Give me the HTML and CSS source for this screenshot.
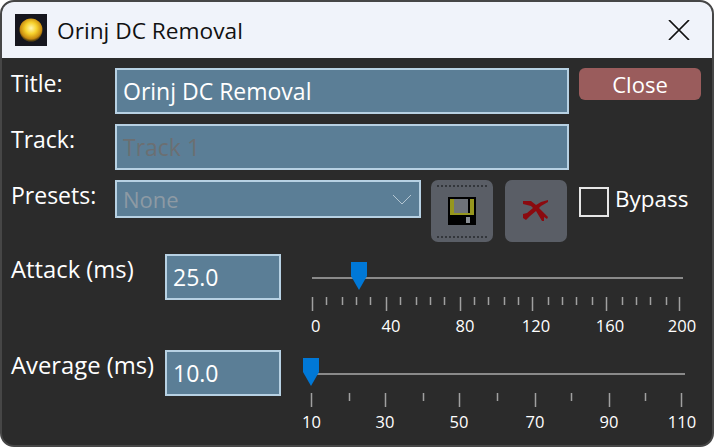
FILE: index.html
```html
<!DOCTYPE html>
<html lang="en">
<head>
  <meta charset="UTF-8" />
  <title>Orinj DC Removal</title>
  <link rel="stylesheet" href="styles.css">
</head>
<body>
  <div class="window">

    <!-- Title bar -->
    <div class="titlebar">
      <svg class="app-icon" width="32" height="32" viewBox="0 0 32 32">
        <defs>
          <radialGradient id="ball" cx="0.5" cy="0.42" r="0.55">
            <stop offset="0" stop-color="#fff6b0" />
            <stop offset="0.45" stop-color="#f7d22c" />
            <stop offset="0.85" stop-color="#c88a10" />
            <stop offset="1" stop-color="#5a4410" />
          </radialGradient>
        </defs>
        <rect width="32" height="32" fill="#16161e" />
        <circle cx="16" cy="16" r="11.5" fill="url(#ball)" />
      </svg>
      <span class="window-title">Orinj DC Removal</span>
      <svg class="close-x" width="22" height="20" viewBox="0 0 22 20">
        <path d="M1 0 L21 20 M21 0 L1 20" stroke="#111" stroke-width="1.7" fill="none" />
      </svg>
    </div>

    <div class="content">
      <div class="row">
        <label class="label">Title:</label>
        <div class="field wide">Orinj DC Removal</div>
        <button class="close-btn">Close</button>
      </div>

      <div class="row">
        <label class="label">Track:</label>
        <div class="field wide disabled">Track 1</div>
      </div>

      <div class="row presets-row">
        <label class="label">Presets:</label>
        <div class="select">
          <span>None</span>
          <svg width="18" height="9" viewBox="0 0 18 9">
            <path d="M0 0 L9 9 L18 0" stroke="#b4c6d2" stroke-width="1" fill="none" />
          </svg>
        </div>
        <button class="icon-btn save-btn">
          <svg width="28" height="28" viewBox="0 0 14 14" shape-rendering="crispEdges">
            <rect width="14" height="14" fill="#000" />
            <rect x="1" y="1" width="12" height="8" fill="#96961e" />
            <rect x="3" y="1" width="7" height="7" fill="#6f7379" />
            <rect x="10" y="1" width="1" height="7" fill="#000" />
            <rect x="9" y="10" width="2" height="3" fill="#8a8e94" />
          </svg>
        </button>
        <button class="icon-btn">
          <svg width="26" height="22" viewBox="0 0 26 22">
            <path d="M0 1 L8 1 L13 5 L18 2 L25 0 L25 2 L18 6 L16 8 L22 14 L25 17 L24 19 L21 17 L21 21 L19 21 L13 11 L7 16 L3 20 L0 18 L0 14 L4 13 L10 8 L8 6 L0 4 Z" fill="#8b0a0f" />
          </svg>
        </button>
        <div class="checkbox"></div>
        <span class="check-label">Bypass</span>
      </div>

      <div class="slider-row">
        <label class="label slider-label">Attack (ms)</label>
        <div class="field number">25.0</div>
        <svg class="slider" width="428" height="96" viewBox="0 0 428 96">
          <rect x="30" y="23" width="371" height="2" fill="#8a8a8a" />
          <path d="M69 8 H85 V22 L77 36 L69 22 Z" fill="#0078d7" />
          <path class="tick" d="M30.500 43 v14 M104.500 43 v14 M178.500 43 v14 M250.500 43 v14 M324.500 43 v14 M397.500 43 v14" />
          <path class="tick" d="M44.500 43 v8 M60.500 43 v8 M74.500 43 v8 M88.500 43 v8 M118.500 43 v8 M134.500 43 v8 M148.500 43 v8 M162.500 43 v8 M192.500 43 v8 M206.500 43 v8 M222.500 43 v8 M236.500 43 v8 M266.500 43 v8 M280.500 43 v8 M294.500 43 v8 M310.500 43 v8 M340.500 43 v8 M354.500 43 v8 M368.500 43 v8 M384.500 43 v8" />
          <g class="scale">
            <text x="33.700" y="78">0</text>
            <text x="109" y="78">40</text>
            <text x="183" y="78">80</text>
            <text x="254" y="78">120</text>
            <text x="328" y="78">160</text>
            <text x="400" y="78">200</text>
          </g>
        </svg>
      </div>

      <div class="slider-row">
        <label class="label slider-label">Average (ms)</label>
        <div class="field number">10.0</div>
        <svg class="slider" width="428" height="96" viewBox="0 0 428 96">
          <rect x="30" y="23" width="373" height="2" fill="#8a8a8a" />
          <path d="M21 8 H37 V22 L29 36 L21 22 Z" fill="#0078d7" />
          <path class="tick" d="M29.500 43 v14 M103.500 43 v14 M177.500 43 v14 M253.500 43 v14 M327.500 43 v14 M399.500 43 v14" />
          <path class="tick" d="M67.500 43 v8 M141.500 43 v8 M215.500 43 v8 M289.500 43 v8 M363.500 43 v8" />
          <g class="scale">
            <text x="29.500" y="78">10</text>
            <text x="103" y="78">30</text>
            <text x="177" y="78">50</text>
            <text x="253" y="78">70</text>
            <text x="327" y="78">90</text>
            <text x="400" y="78">110</text>
          </g>
        </svg>
      </div>
    </div>
  </div>
</body>
</html>
```

FILE: styles.css
```css
* {
  margin: 0;
  padding: 0;
  box-sizing: border-box;
  font-family: 'Open Sans', 'Noto Sans', sans-serif;
}

body {
  background: #fff;
  width: 714px;
  height: 447px;
  overflow: hidden;
}

.window {
  width: 714px;
  height: 447px;
  border: 2px solid #464646;
  border-radius: 14px;
  overflow: hidden;
  background: #2b2b2b;
  display: flex;
  flex-direction: column;
}

/* Title bar */
.titlebar {
  height: 56px;
  background: #f0f3fa;
  display: flex;
  align-items: center;
  padding-left: 13px;
  padding-right: 22px;
  flex-shrink: 0;
}

.window-title {
  font-size: 22.700px;
  color: #111;
  margin-left: 10px;
  flex: 1;
}

/* Form */
.content {
  padding: 10px 0 0 9px;
  color: #fff;
}

.row {
  display: flex;
  align-items: flex-start;
  margin-bottom: 10px;
  height: 46px;
}

.presets-row {
  height: 62px;
  margin-bottom: 12px;
}

.label {
  font-size: 23px;
  line-height: 30px;
  width: 104px;
  flex-shrink: 0;
  color: #fff;
}

.field {
  height: 46px;
  background: #5b7e96;
  border: 2px solid #b7d1e3;
  color: #fff;
  font-size: 23px;
  line-height: 42px;
  padding-left: 6px;
}

.wide {
  width: 454px;
}

.disabled {
  color: #6b6f72;
}

.close-btn {
  width: 122px;
  height: 32px;
  margin-left: 10px;
  background: #9a5c5c;
  border: none;
  border-radius: 6px;
  color: #fff;
  font-size: 22px;
}

.select {
  width: 306px;
  height: 38px;
  background: #5b7e96;
  border: 2px solid #b7d1e3;
  color: #8d9aa4;
  font-size: 22px;
  display: flex;
  align-items: center;
  justify-content: space-between;
  padding: 0 8px 0 6px;
}

.icon-btn {
  position: relative;
  width: 62px;
  height: 62px;
  margin-left: 12px;
  background: #5a5e66;
  border: none;
  border-radius: 7px;
  display: flex;
  align-items: center;
  justify-content: center;
}

.save-btn {
  margin-left: 10px;
}

.save-btn::before,
.save-btn::after {
  content: "";
  position: absolute;
  left: 6px;
  right: 6px;
  height: 2px;
  background: repeating-linear-gradient(90deg, #33363b 0 2px, transparent 2px 4px);
}

.save-btn::before {
  top: 5px;
}

.save-btn::after {
  bottom: 4px;
}

.checkbox {
  width: 30px;
  height: 30px;
  margin: 7px 0 0 12px;
  border: 2px solid #e6e6e6;
}

.check-label {
  font-size: 22.500px;
  line-height: 30px;
  margin: 4px 0 0 6px;
}

/* Sliders */
.slider-row {
  display: flex;
  align-items: flex-start;
  height: 96px;
}

.slider-label {
  width: 154px;
  font-size: 23.800px;
}

.number {
  width: 116px;
}

.slider {
  margin-left: 1px;
}

.tick {
  stroke: #a0a0a0;
  stroke-width: 1.5;
  fill: none;
}

.scale text {
  fill: #fff;
  font-size: 16.500px;
  text-anchor: middle;
}
```
